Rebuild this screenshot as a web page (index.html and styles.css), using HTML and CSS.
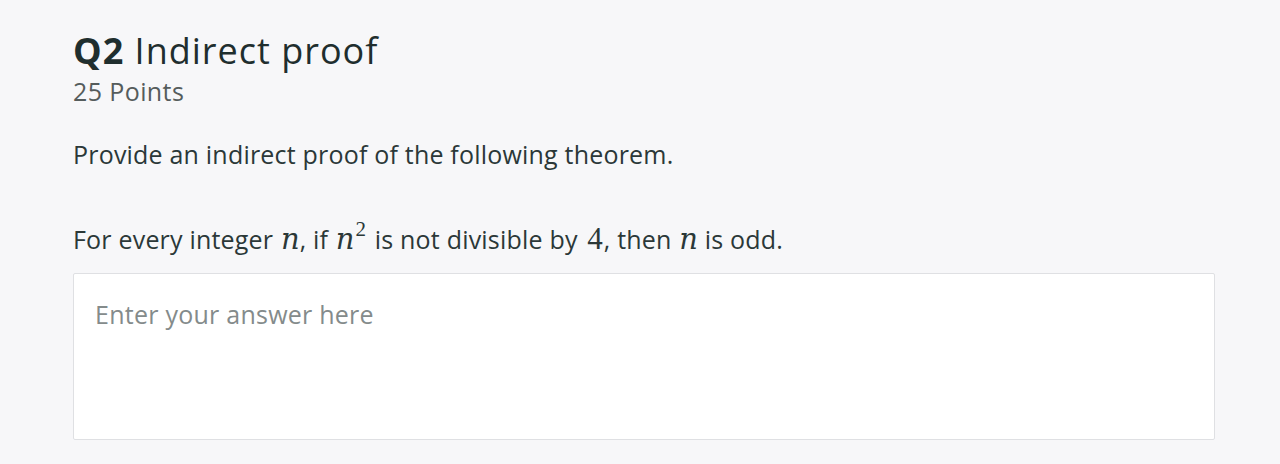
FILE: index.html
```html
<!DOCTYPE html>
<html>
<head>
<meta charset="utf-8">
<link rel="stylesheet" href="styles.css">
</head>
<body>
<main class="question">
  <header class="q-header">
    <h1 class="q-title"><span class="q-num">Q2</span> Indirect proof</h1>
    <div class="q-points">25 Points</div>
  </header>
  <p class="q-text q-intro">Provide an indirect proof of the following theorem.</p>
  <p class="q-text q-theorem">For every integer <span class="math">n</span>, if <span class="math">n<sup class="sup">2</sup></span> is not divisible by <span class="num">4</span>, then <span class="math">n</span> is odd.</p>
  <div class="answer">
    <textarea class="answer-input" placeholder="Enter your answer here"></textarea>
  </div>
</main>
</body>
</html>
```
FILE: styles.css
```css
html, body {
  margin: 0;
  padding: 0;
  background: #f7f7f9;
}
body {
  font-family: "Open Sans", Lato, sans-serif;
  color: #273636;
}
.question {
  padding: 29px 66px 0 73px;
}
.q-title {
  margin: 0;
  font-size: 36px;
  font-weight: 400;
  line-height: 44px;
  letter-spacing: 1px;
  color: #1f2e2e;
}
.q-num {
  font-weight: 700;
}
.q-points {
  margin-top: 4px;
  font-size: 25px;
  line-height: 28px;
  letter-spacing: 0.4px;
  color: #555c5c;
}
.q-text {
  margin: 0;
  font-size: 25px;
  line-height: 32px;
  letter-spacing: 0.2px;
  color: #2b3838;
}
.q-intro {
  margin-top: 33px;
}
.q-theorem {
  margin-top: 53px;
}
.math {
  font-family: "DejaVu Serif", "Liberation Serif", serif;
  font-style: italic;
  font-size: 29px;
  line-height: 1;
  letter-spacing: 0;
  margin-left: 1px;
}
.num {
  font-family: "Liberation Serif", "DejaVu Serif", serif;
  font-size: 31px;
  line-height: 1;
  letter-spacing: 0;
  margin: 0 1px 0 3px;
}
.sup {
  font-family: "Liberation Serif", "DejaVu Serif", serif;
  font-style: normal;
  font-size: 21px;
  vertical-align: 13px;
  line-height: 0;
  margin-left: 1px;
  margin-right: 2px;
}
.answer {
  margin-top: 18px;
}
.answer-input {
  display: block;
  box-sizing: border-box;
  width: 1142px;
  height: 167px;
  margin: 0;
  padding: 23px 21px;
  border: 1px solid #dfe0e3;
  border-radius: 2px;
  background: #fff;
  resize: none;
  font-family: "Open Sans", Lato, sans-serif;
  font-size: 25px;
  line-height: 34px;
  letter-spacing: 0.25px;
  color: #2b3838;
}
.answer-input::placeholder {
  color: #848b8b;
}
```
